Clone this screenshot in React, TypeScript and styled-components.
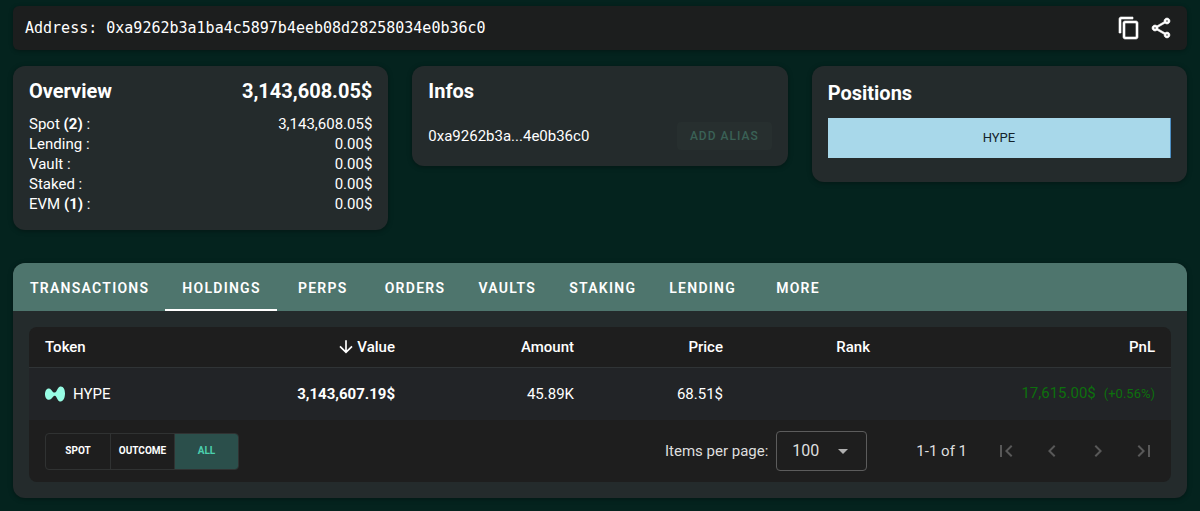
import React, { useState } from "react";
import styled, { createGlobalStyle } from "styled-components";
import { MdContentCopy, MdOutlineShare } from "react-icons/md";

const GlobalStyle = createGlobalStyle`
  * { box-sizing: border-box; }
  body {
    margin: 0;
    background: #04231e;
    color: #fff;
    font: 15px/20px Roboto, "Liberation Sans", sans-serif;
  }
  button, select { font: inherit; color: inherit; }
`;

const Page = styled.main`
  padding: 6px 13px 13px;
`;

const AddressBar = styled.header`
  display: flex;
  align-items: center;
  justify-content: space-between;
  height: 44px;
  padding: 0 14px 0 12px;
  border-radius: 6px;
  background: #1c1e1e;
  box-shadow: 0 1px 4px rgba(0, 0, 0, 0.3);
`;

const AddressText = styled.span`
  font-family: "DejaVu Sans Mono", monospace;
  font-size: 15px;
`;

const IconGroup = styled.div`
  display: flex;
  gap: 8px;

  path:not([fill="none"]) {
    stroke: currentColor;
    stroke-width: 0.6px;
  }
`;

const IconButton = styled.button<{ $width?: number }>`
  display: flex;
  align-items: center;
  justify-content: center;
  width: ${(p) => (p.$width ? `${p.$width}px` : "auto")};
  padding: 0;
  border: 0;
  background: none;
  cursor: pointer;

  &:disabled {
    opacity: 0.3;
    cursor: default;
  }
`;

const Cards = styled.div`
  display: grid;
  grid-template-columns: repeat(3, 1fr);
  gap: 24px;
  align-items: start;
  margin: 16px 0 33px;
`;

const Card = styled.section`
  padding: 12px 16px 16px;
  border-radius: 12px;
  background: #242b2c;
  box-shadow: 0 1px 5px rgba(0, 0, 0, 0.35);
`;

const CardHead = styled.div`
  display: flex;
  justify-content: space-between;
  margin-bottom: 10px;
  font-size: 20px;
  line-height: 26px;
  font-weight: 700;
`;

const CardTitle = styled.h2`
  margin: 0;
  font-size: 20px;
  line-height: 26px;
  font-weight: 700;
`;

const Line = styled.div`
  display: flex;
  align-items: center;
  justify-content: space-between;
`;

const AliasButton = styled.button`
  height: 28px;
  padding: 0 13px;
  border: 0;
  border-radius: 4px;
  background: #272f2f;
  color: #3a6156;
  font-size: 12px;
  font-weight: 500;
  letter-spacing: 1px;
`;

const InfoLine = styled(Line)`
  padding-top: 8px;
`;

const PositionsCard = styled(Card)`
  padding: 14px 16px 24px;
`;

const PositionBar = styled.div`
  display: flex;
  height: 40px;
  margin-top: 12px;
`;

const Segment = styled.div<{ $color: string }>`
  display: flex;
  align-items: center;
  justify-content: center;
  background: ${(p) => p.$color};
  color: #14232b;
  font-size: 13px;
`;

const Panel = styled.section`
  overflow: hidden;
  border-radius: 12px;
  background: #242b2c;
  box-shadow: 0 1px 5px rgba(0, 0, 0, 0.35);
`;

const Tabs = styled.nav`
  display: flex;
  height: 48px;
  background: #4e756d;
`;

const Tab = styled.button<{ $active: boolean }>`
  min-width: 91px;
  padding: 3px 16px 0 17px;
  border: 0;
  border-bottom: 2px solid ${(p) => (p.$active ? "#fff" : "transparent")};
  background: none;
  font-size: 14px;
  font-weight: 600;
  letter-spacing: 0.09em;
  cursor: pointer;
`;

const TableBox = styled.div`
  margin: 16px;
  overflow: hidden;
  border-radius: 8px;
  background: #1e1e1e;
`;

const Table = styled.table`
  width: 100%;
  table-layout: fixed;
  border-collapse: collapse;
`;

const HeadCell = styled.th<{ $left?: boolean }>`
  height: 40px;
  padding: 1px 16px 0;
  border-bottom: 1px solid #303436;
  font-weight: 500;
  text-align: ${(p) => (p.$left ? "left" : "right")};
`;

const Sort = styled.span`
  display: flex;
  align-items: center;
  justify-content: flex-end;
  gap: 1px;
`;

const Cell = styled.td<{ $left?: boolean; $bold?: boolean }>`
  height: 53px;
  padding: 0 16px;
  background: #222427;
  font-weight: ${(p) => (p.$bold ? 700 : 400)};
  text-align: ${(p) => (p.$left ? "left" : "right")};
  white-space: nowrap;
`;

const TokenName = styled.span`
  display: flex;
  align-items: center;
  gap: 8px;
`;

const Gain = styled.span`
  color: #0d700d;
`;

const Percent = styled.small`
  margin-left: 8px;
  font-size: 13px;
`;

const Footer = styled.div`
  display: flex;
  align-items: center;
  justify-content: space-between;
  height: 62px;
  padding: 0 4px 0 16px;
`;

const Toggle = styled.div`
  display: grid;
  grid-template-columns: repeat(3, 1fr);
  width: 194px;
  height: 37px;
  border: 1px solid #303232;
  border-radius: 4px;
  overflow: hidden;
`;

const ToggleButton = styled.button<{ $active: boolean }>`
  padding: 0;
  border: 0;
  border-left: 1px solid #303232;
  background: ${(p) => (p.$active ? "#2b4f4b" : "none")};
  color: ${(p) => (p.$active ? "#4bd0ae" : "#fff")};
  font-size: 10px;
  font-weight: 700;
  cursor: pointer;

  &:first-child { border-left: 0; }
`;

const Pager = styled.div`
  display: flex;
  align-items: center;
  color: #dedede;
`;

const SelectBox = styled.div`
  display: grid;
  align-items: center;
  width: 91px;
  margin: 0 33px 0 8px;

  > * { grid-area: 1 / 1; }
  > svg {
    justify-self: end;
    margin-right: 12px;
    pointer-events: none;
  }
`;

const Select = styled.select`
  width: 100%;
  height: 40px;
  padding: 0 15px;
  border: 1px solid #5c5c5c;
  border-radius: 4px;
  background: none;
  font-size: 16px;
  appearance: none;
`;

const Range = styled.span`
  padding: 0 16px;
`;

const icons = {
  down: "M11 4H13V16L18.5 10.5L19.92 11.92L12 19.84L4.08 11.92L5.5 10.5L11 16V4Z",
  caret: "M7 10L12 15L17 10H7Z",
  first: "M18.41 16.59L13.82 12L18.41 7.41L17 6L11 12L17 18L18.41 16.59M6 6H8V18H6V6Z",
  prev: "M15.41 16.58L10.83 12L15.41 7.41L14 6L8 12L14 18L15.41 16.58Z",
  next: "M8.59 16.58L13.17 12L8.59 7.41L10 6L16 12L10 18L8.59 16.58Z",
  last: "M5.59 7.41L10.18 12L5.59 16.59L7 18L13 12L7 6L5.59 7.41M16 6H18V18H16V6Z",
};

function Icon({ name, size = 24, color = "currentColor" }: { name: keyof typeof icons; size?: number; color?: string }) {
  return (
    <svg width={size} height={size} viewBox="0 0 24 24" fill={color} aria-hidden="true">
      <path d={icons[name]} />
    </svg>
  );
}

function HypeLogo() {
  return (
    <svg width="20" height="16" viewBox="0 0 20 16" fill="#97fce4" aria-hidden="true">
      <path d="M20 7.6C20 12 18.300 15.500 15.700 15.500C13.300 15.500 12.300 12.900 11.300 10.900C10.400 9.400 9.200 9.400 8.100 10.700C6.900 12.200 6 13.700 3.800 13.700C1.300 13.700 0 11 0 8.200C0 5 1.500 2.600 3.700 2.600C5.800 2.600 6.600 4.500 7.900 5.900C9.100 7 10.500 6.800 11.400 5.200C12.400 3.200 13.400 .4 15.900 .4C18.500 .4 20 3.500 20 7.600Z" />
    </svg>
  );
}

const balances = [
  { label: "Spot", count: 2, value: "3,143,608.05$" },
  { label: "Lending", value: "0.00$" },
  { label: "Vault", value: "0.00$" },
  { label: "Staked", value: "0.00$" },
  { label: "EVM", count: 1, value: "0.00$" },
];

const tabs = ["TRANSACTIONS", "HOLDINGS", "PERPS", "ORDERS", "VAULTS", "STAKING", "LENDING", "MORE"];
const filters = ["SPOT", "OUTCOME", "ALL"];
const columnWidths = [191, 191, 179, 149, 147, 285];
const pages = [
  { label: "First page", icon: "first" },
  { label: "Previous page", icon: "prev" },
  { label: "Next page", icon: "next" },
  { label: "Last page", icon: "last" },
] as const;

export default function App() {
  const [tab, setTab] = useState("HOLDINGS");
  const [filter, setFilter] = useState("ALL");

  return (
    <Page>
      <GlobalStyle />
      <AddressBar>
        <AddressText>Address: 0xa9262b3a1ba4c5897b4eeb08d28258034e0b36c0</AddressText>
        <IconGroup>
          <IconButton aria-label="Copy address"><MdContentCopy size={24} /></IconButton>
          <IconButton aria-label="Share"><MdOutlineShare size={24} /></IconButton>
        </IconGroup>
      </AddressBar>

      <Cards>
        <Card>
          <CardHead>
            <CardTitle>Overview</CardTitle>
            <span>3,143,608.05$</span>
          </CardHead>
          {balances.map((b) => (
            <Line key={b.label}>
              <span>{b.label} {b.count && <b>({b.count})</b>}{b.count ? " :" : ":"}</span>
              <span>{b.value}</span>
            </Line>
          ))}
        </Card>
        <Card>
          <CardHead><CardTitle>Infos</CardTitle></CardHead>
          <InfoLine>
            <span>0xa9262b3a...4e0b36c0</span>
            <AliasButton disabled>ADD ALIAS</AliasButton>
          </InfoLine>
        </Card>
        <PositionsCard>
          <CardTitle>Positions</CardTitle>
          <PositionBar>
            <Segment $color="#a8d8ea" style={{ flexGrow: 342 }}>HYPE</Segment>
            <Segment $color="#4d8fc4" style={{ flexGrow: 1 }} />
          </PositionBar>
        </PositionsCard>
      </Cards>

      <Panel>
        <Tabs>
          {tabs.map((t) => (
            <Tab key={t} $active={t === tab} onClick={() => setTab(t)}>{t}</Tab>
          ))}
        </Tabs>
        <TableBox>
          <Table>
            <colgroup>
              {columnWidths.map((w, i) => <col key={i} width={w} />)}
            </colgroup>
            <thead>
              <tr>
                <HeadCell $left>Token</HeadCell>
                <HeadCell><Sort><Icon name="down" size={20} />Value</Sort></HeadCell>
                <HeadCell>Amount</HeadCell>
                <HeadCell>Price</HeadCell>
                <HeadCell>Rank</HeadCell>
                <HeadCell>PnL</HeadCell>
              </tr>
            </thead>
            <tbody>
              <tr>
                <Cell $left><TokenName><HypeLogo />HYPE</TokenName></Cell>
                <Cell $bold>3,143,607.19$</Cell>
                <Cell>45.89K</Cell>
                <Cell>68.51$</Cell>
                <Cell />
                <Cell><Gain>17,615.00$<Percent>(+0.56%)</Percent></Gain></Cell>
              </tr>
            </tbody>
          </Table>
          <Footer>
            <Toggle>
              {filters.map((f) => (
                <ToggleButton key={f} $active={f === filter} onClick={() => setFilter(f)}>{f}</ToggleButton>
              ))}
            </Toggle>
            <Pager>
              <label htmlFor="page-size">Items per page:</label>
              <SelectBox>
                <Select id="page-size" defaultValue="100">
                  <option>25</option>
                  <option>50</option>
                  <option>100</option>
                </Select>
                <Icon name="caret" color="#b0b0b0" />
              </SelectBox>
              <Range>1-1 of 1</Range>
              {pages.map((p) => (
                <IconButton key={p.label} $width={46} aria-label={p.label} disabled><Icon name={p.icon} /></IconButton>
              ))}
            </Pager>
          </Footer>
        </TableBox>
      </Panel>
    </Page>
  );
}
